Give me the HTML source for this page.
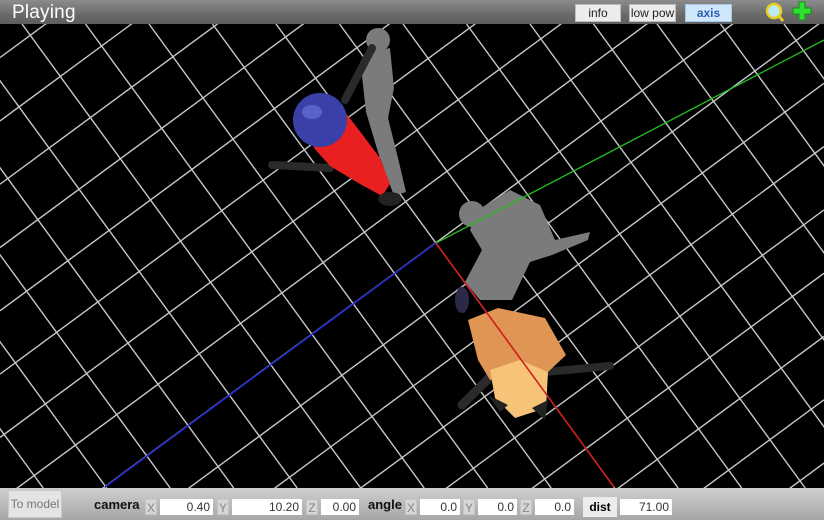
<!DOCTYPE html>
<html style="overflow:hidden"><head><style>
html,body{margin:0;width:824px;height:520px;overflow:hidden}
body{background:#000;font-family:"Liberation Sans",sans-serif;position:relative}
#top{position:absolute;left:0;top:0;width:824px;height:24px;background:linear-gradient(#8c8c8c,#6a6a6a 60%,#5e5e5e)}
#top .t{position:absolute;left:12px;top:2px;color:#fff;font-size:19px;letter-spacing:0.2px}
.tb{position:absolute;top:4px;height:18px;background:#ececec;border:1px solid #bdbdbd;box-sizing:border-box;font-size:12px;line-height:16px;text-align:center;color:#222}
#bot{position:absolute;left:0;top:488px;width:824px;height:32px;background:linear-gradient(#cfcfcf,#a6a6a6);overflow:hidden}
.bx{position:absolute;top:11px;height:16px;font-size:12px;line-height:16px;box-sizing:border-box}
.lab{background:#d6d6d6;color:#888;width:12px;text-align:center;border:1px solid #c4c4c4}
.in{background:#fff;text-align:right;padding-right:3px;color:#333}
.bl{font-weight:bold;color:#111;font-size:13px;top:9px}
</style></head><body>
<svg width="824" height="520" style="position:absolute;left:0;top:0;display:block">
<defs><clipPath id="c"><rect x="0" y="24" width="824" height="464"/></clipPath></defs>
<g clip-path="url(#c)">
<path fill="none" stroke="#c8c8c8" stroke-width="1.4" d="
M-295.5 24L43.2 488M-232 24L106.7 488M-168.5 24L170.2 488M-105 24L233.7 488M-41.5 24L297.2 488M22 24L360.7 488M85.5 24L424.2 488M149 24L487.7 488M212.5 24L551.2 488M276 24L614.7 488M339.5 24L678.2 488M403 24L741.7 488M466.5 24L805.2 488M530 24L868.7 488M593.5 24L932.2 488M657 24L995.7 488M720.5 24L1059.2 488M784 24L1122.7 488
M0 57.6L824 -549.7M0 120.9L824 -486.4M0 184.2L824 -423.1M0 247.5L824 -359.8M0 310.8L824 -296.5M0 374.1L824 -233.2M0 437.4L824 -169.9M0 500.7L824 -106.6M0 564L824 -43.3M0 627.3L824 20M0 690.6L824 83.3M0 753.9L824 146.6M0 817.2L824 209.9M0 880.5L824 273.2M0 943.8L824 336.5M0 1007.1L824 399.8M0 1070.4L824 463.1"/>
</g>
<g fill="#7b7b7b">
<circle cx="378" cy="40" r="12"/>
<polygon points="364,55 390,48 394,88 388,118 398,158 406,192 394,196 378,152 366,112 362,76"/>
<polygon points="478,210 510,190 540,205 555,240 590,232 588,240 552,255 530,262 512,300 480,300 465,282 482,250 470,230"/>
<circle cx="472" cy="214" r="13"/>
</g>
<g stroke="#2a2a2a" stroke-linecap="round" fill="none">
<line x1="272" y1="165" x2="330" y2="168" stroke-width="8"/>
<line x1="345" y1="100" x2="372" y2="48" stroke-width="8"/>
</g>
<polygon fill="#e82020" points="312,128 345,112 362,134 380,158 390,184 382,196 360,184 330,166 314,148"/>
<ellipse cx="390" cy="199" rx="12" ry="7" fill="#222"/>
<circle cx="320" cy="120" r="27" fill="#3a40a8"/>
<ellipse cx="312" cy="112" rx="10" ry="7" fill="#5a62c8"/>
<ellipse cx="462" cy="300" rx="7" ry="13" fill="#2a2a48"/>
<g stroke="#2a2a2a" stroke-linecap="round" fill="none">
<line x1="462" y1="405" x2="502" y2="365" stroke-width="9"/>
<line x1="545" y1="372" x2="610" y2="366" stroke-width="8"/>
</g>
<polygon fill="#df9553" points="468,320 498,308 545,318 566,355 548,372 520,372 490,380 478,360"/>
<polygon fill="#f6c378" points="490,370 520,360 548,372 546,408 515,418 495,398"/>
<polygon fill="#222" points="488,395 508,405 500,412"/>
<polygon fill="#222" points="532,408 548,400 545,420"/>
<line x1="436" y1="243" x2="824" y2="40" stroke="#22c022" stroke-width="1.3"/>
<line x1="436" y1="243" x2="105" y2="487" stroke="#1a22d0" stroke-width="1.5"/>
<line x1="436" y1="243" x2="614" y2="487" stroke="#d01818" stroke-width="1.5"/>
</svg>
<div id="top"><div class="t">Playing</div>
<div class="tb" style="left:575px;width:46px">info</div>
<div class="tb" style="left:629px;width:47px">low pow</div>
<div class="tb" style="left:685px;width:47px;background:#cfe6fb;color:#2a5fb0;font-weight:bold;border-color:#a8c8e8">axis</div>
<svg width="50" height="24" style="position:absolute;left:764px;top:0">
<circle cx="10" cy="11" r="7" fill="#bfe8f0" stroke="#e8d020" stroke-width="2.5"/>
<line x1="15" y1="16" x2="19" y2="21" stroke="#e8d020" stroke-width="3"/>
<path d="M35 2h6v6h6v6h-6v6h-6v-6h-6v-6h6z" fill="#30e030" stroke="#109010" stroke-width="1"/>
</svg>
</div>
<div id="bot">
<div class="bx" style="left:8px;top:2px;width:54px;height:28px;background:#e4e4e4;border:1px solid #c8c8c8;color:#777;text-align:center;line-height:26px">To model</div>
<div class="bx bl" style="left:94px">camera</div>
<div class="bx lab" style="left:145px">X</div><div class="bx in" style="left:160px;width:53px">0.40</div>
<div class="bx lab" style="left:217px">Y</div><div class="bx in" style="left:232px;width:70px">10.20</div>
<div class="bx lab" style="left:306px">Z</div><div class="bx in" style="left:321px;width:38px">0.00</div>
<div class="bx bl" style="left:368px">angle</div>
<div class="bx lab" style="left:405px">X</div><div class="bx in" style="left:420px;width:40px">0.0</div>
<div class="bx lab" style="left:463px">Y</div><div class="bx in" style="left:478px;width:39px">0.0</div>
<div class="bx lab" style="left:520px">Z</div><div class="bx in" style="left:535px;width:39px">0.0</div>
<div class="bx" style="left:583px;top:9px;height:20px;width:34px;background:#ececec;font-weight:bold;text-align:center;line-height:20px">dist</div>
<div class="bx in" style="left:620px;width:52px">71.00</div>
</div>
</body></html>
